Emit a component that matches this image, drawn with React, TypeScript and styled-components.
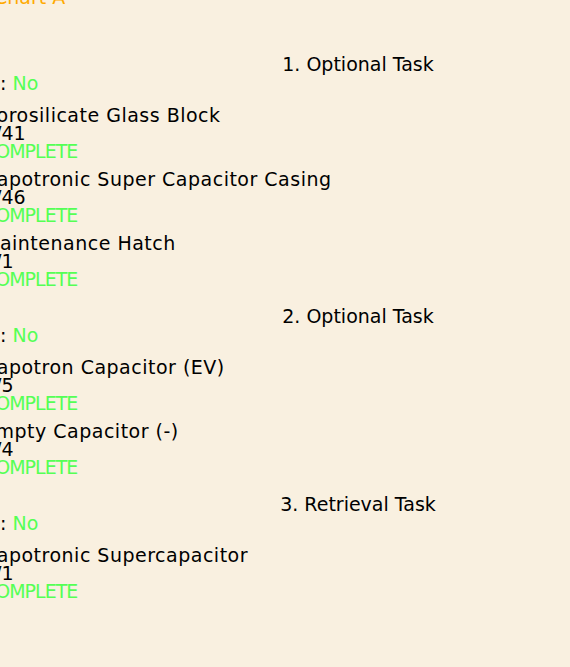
import React from "react";
import styled, { createGlobalStyle } from "styled-components";

const Global = createGlobalStyle`
  html, body {
    margin: 0;
    padding: 0;
    background: #f9f0e0;
    overflow: hidden;
  }
  body {
    width: 570px;
    height: 667px;
    font-family: "DejaVu Sans", "Noto Sans", sans-serif;
    font-size: 19px;
    line-height: 18px;
    color: #000;
  }
`;

const Page = styled.div`
  display: flex;
  flex-direction: column;
  margin-top: -12px;
  margin-left: -89px;
`;

const Title = styled.div`
  color: #ffaa00;
  padding-left: 83px;
  margin-bottom: 49px;
  white-space: nowrap;
`;

const Panel = styled.div`
  display: flex;
  flex-direction: column;
  gap: 19px;
  width: 894px;
`;

const Section = styled.section`
  display: flex;
  flex-direction: column;
`;

const Heading = styled.div`
  text-align: center;
  margin-bottom: 1px;
  white-space: nowrap;
`;

const ConsumeLine = styled.div`
  white-space: nowrap;
  margin-bottom: 14px;
`;

const Green = styled.span<{ $tight?: boolean }>`
  color: #55ff55;
  letter-spacing: ${(p) => (p.$tight ? "-1px" : "0")};
`;

const ItemList = styled.div`
  display: flex;
  flex-direction: column;
  gap: 10px;
`;

const Item = styled.div`
  display: flex;
  flex-direction: column;
  padding-left: 72px;
  white-space: nowrap;
`;

const Line = styled.div<{ $wide?: boolean }>`
  letter-spacing: ${(p) => (p.$wide ? "0.5px" : "0")};
`;

type Task = {
  title: string;
  items: { name: string; count: string }[];
};

const tasks: Task[] = [
  {
    title: "1. Optional Task",
    items: [
      { name: "Borosilicate Glass Block", count: "0/41" },
      { name: "Capotronic Super Capacitor Casing", count: "0/46" },
      { name: "Maintenance Hatch", count: "0/1" },
    ],
  },
  {
    title: "2. Optional Task",
    items: [
      { name: "Capotron Capacitor (EV)", count: "0/5" },
      { name: "Empty Capacitor (-)", count: "0/4" },
    ],
  },
  {
    title: "3. Retrieval Task",
    items: [{ name: "Capotronic Supercapacitor", count: "0/1" }],
  },
];

export default function App() {
  return (
    <>
      <Global />
      <Page>
        <Title>Chart A</Title>
        <Panel>
          {tasks.map((t) => (
            <Section key={t.title}>
              <Heading>{t.title}</Heading>
              <ConsumeLine>
                Consume: <Green>No</Green>
              </ConsumeLine>
              <ItemList>
                {t.items.map((it) => (
                  <Item key={it.name}>
                    <Line $wide>{it.name}</Line>
                    <Line>{it.count}</Line>
                    <Line>
                      <Green $tight>COMPLETE</Green>
                    </Line>
                  </Item>
                ))}
              </ItemList>
            </Section>
          ))}
        </Panel>
      </Page>
    </>
  );
}
